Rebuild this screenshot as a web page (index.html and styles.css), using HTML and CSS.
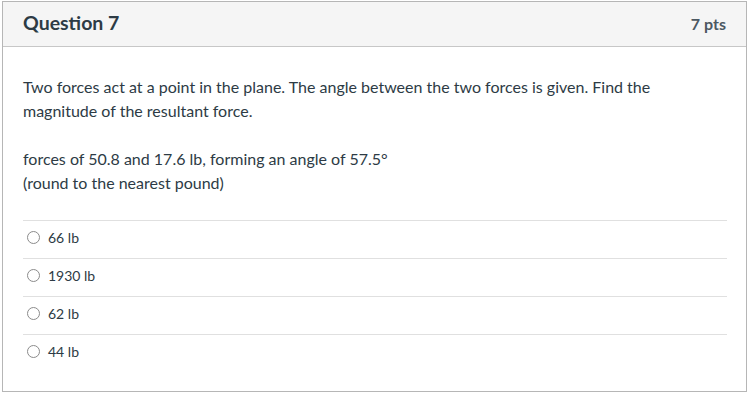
FILE: index.html
```html
<!DOCTYPE html>
<html>
<head>
<meta charset="utf-8">
<link rel="stylesheet" href="styles.css">
</head>
<body>
<div class="question">
  <div class="header">
    <div class="title">Question 7</div>
    <div class="pts">7 pts</div>
  </div>
  <div class="content">
    <div class="text">
      <p>Two forces act at a point in the plane. The angle between the two forces is given. Find the magnitude of the resultant force.</p>
      <p>forces of 50.8 and 17.6 lb, forming an angle of 57.5°<br>(round to the nearest pound)</p>
    </div>
    <div class="answers">
      <label class="answer"><span class="radio"></span><span class="atext">66 lb</span></label>
      <label class="answer"><span class="radio"></span><span class="atext">1930 lb</span></label>
      <label class="answer"><span class="radio"></span><span class="atext">62 lb</span></label>
      <label class="answer"><span class="radio"></span><span class="atext">44 lb</span></label>
    </div>
  </div>
</div>
</body>
</html>
```
FILE: styles.css
```css
html, body {
  margin: 0;
  padding: 0;
  background: #fff;
}
body {
  font-family: Lato, "Noto Sans", sans-serif;
  color: #2d3b45;
}
.question {
  margin: 1px 2px;
  border: 1px solid #b6b6b6;
  box-sizing: border-box;
  height: 391px;
}
.header {
  display: flex;
  justify-content: space-between;
  align-items: center;
  height: 44px;
  padding: 0 20px;
  background: #f5f5f5;
  border-bottom: 1px solid #c7c7c7;
}
.title {
  font-size: 19.5px;
  font-weight: 700;
  padding-bottom: 4px;
}
.pts {
  font-size: 16px;
  font-weight: 700;
  color: #4c5862;
  padding-bottom: 2px;
}
.content {
  padding: 28px 19px 0 20px;
}
.text {
  font-size: 16px;
  line-height: 24px;
}
.text p {
  margin: 0 0 24px 0;
}
.text p:last-child {
  margin-bottom: 25px;
}
.answers {
  display: flex;
  flex-direction: column;
}
.answer {
  display: flex;
  align-items: center;
  height: 33px;
  padding-bottom: 4px;
  border-top: 1px solid #e0e0e0;
  font-size: 14px;
}
.radio {
  width: 11px;
  height: 11px;
  border: 1px solid #8b8b8b;
  border-radius: 50%;
  margin-left: 4px;
  margin-right: 8px;
  background: #fff;
}
.atext {
  line-height: 20px;
}
```
